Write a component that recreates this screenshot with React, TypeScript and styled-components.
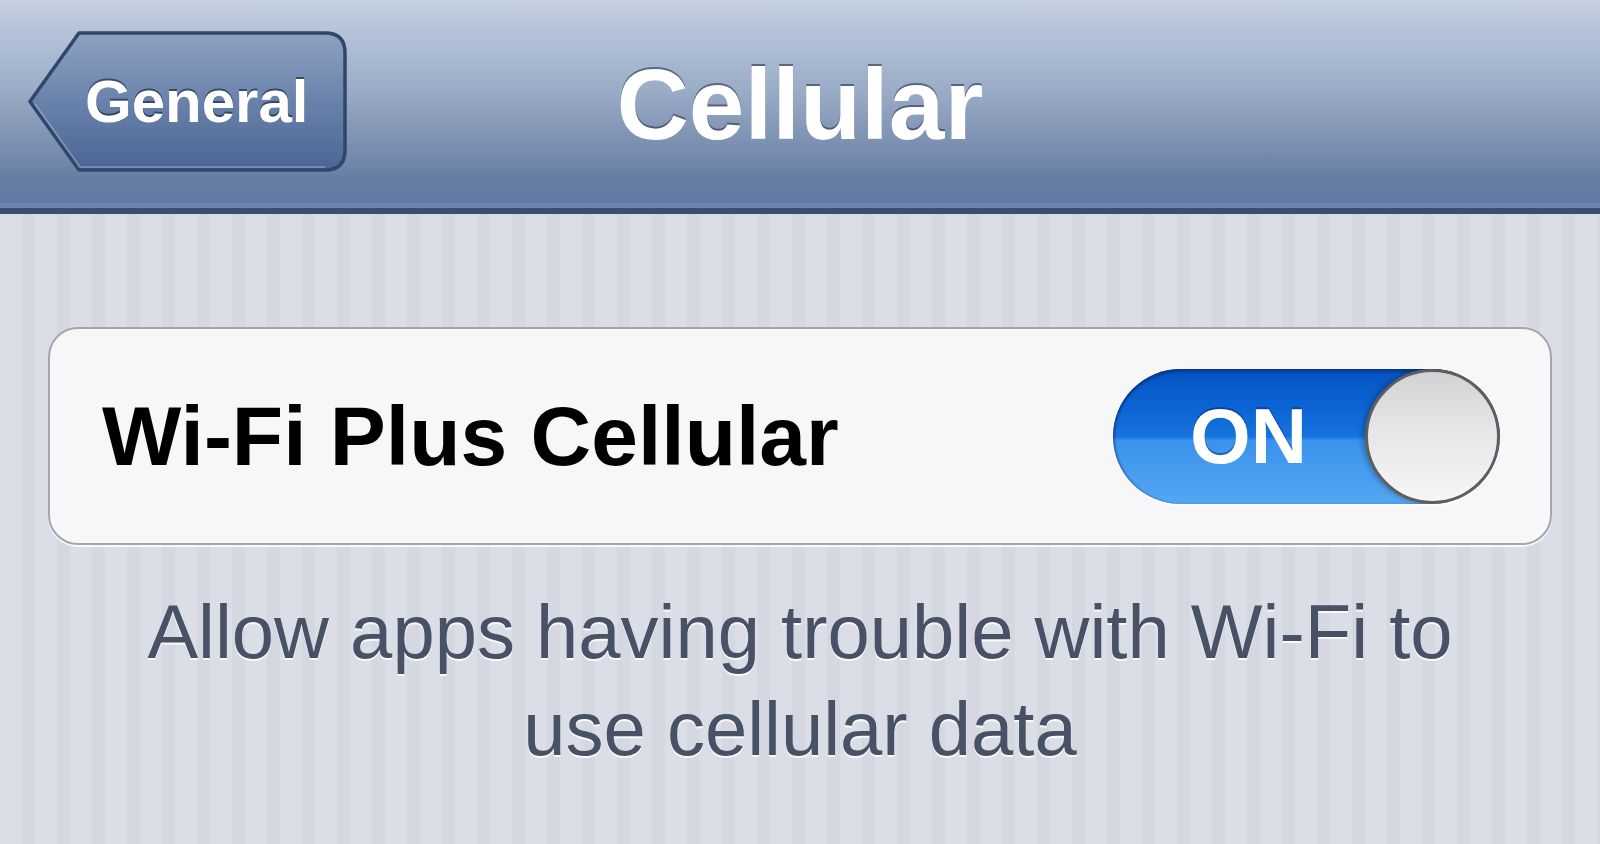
import React from "react";
import styled, { createGlobalStyle } from "styled-components";

const GlobalStyle = createGlobalStyle`
  html, body {
    margin: 0;
    padding: 0;
    height: 100%;
  }
  body {
    font-family: "Liberation Sans", Arial, Helvetica, sans-serif;
    background-color: #d9dce4;
    background-image: repeating-linear-gradient(
      90deg,
      #dbdee6 0px,
      #dbdee6 22px,
      #d5d8e1 22px,
      #d5d8e1 35px
    );
    overflow: hidden;
  }
  #root {
    min-height: 100%;
  }
`;

const Screen = styled.div`
  width: 1600px;
  height: 844px;
  display: flex;
  flex-direction: column;
`;

const NavBar = styled.header`
  height: 208px;
  display: grid;
  grid-template-columns: 1fr auto 1fr;
  align-items: start;
  background: linear-gradient(
    180deg,
    #c6d2e2 0%,
    #b6c4d9 14%,
    #9cadc7 42%,
    #7f93b3 66%,
    #677ea4 86%,
    #5e779f 100%
  );
  border-bottom: 6px solid #3a4f6e;
  box-shadow: inset 0 -5px 0 #6b83ad;
`;

const BackButton = styled.button`
  position: relative;
  justify-self: start;
  margin: 30px 0 0 27px;
  width: 321px;
  height: 143px;
  box-sizing: border-box;
  padding: 0 40px 0 58px;
  border: 0;
  background: transparent;
  display: flex;
  align-items: center;
  font-family: inherit;
  font-weight: 700;
  font-size: 60px;
  color: #ffffff;
  cursor: pointer;
`;

const ButtonShape = styled.svg`
  position: absolute;
  inset: 0;
  width: 100%;
  height: 100%;
  z-index: 0;
`;

const ButtonLabel = styled.span`
  position: relative;
  z-index: 1;
  line-height: 60px;
  text-shadow: 0 -2px 0 rgba(20, 32, 58, 0.6);
`;

const Title = styled.h1`
  margin: 54px 0 0;
  font-size: 100px;
  line-height: 100px;
  font-weight: 700;
  color: #ffffff;
  text-shadow: 0 -2px 0 rgba(40, 54, 80, 0.6);
`;

const Content = styled.main`
  padding: 113px 48px 0;
  display: flex;
  flex-direction: column;
`;

const Card = styled.section`
  height: 218px;
  box-sizing: border-box;
  border: 2px solid #a3a6ad;
  border-radius: 30px;
  background: #f7f7f7;
  box-shadow: 0 2px 0 rgba(255, 255, 255, 0.8);
  display: flex;
  align-items: center;
  justify-content: space-between;
  padding: 0 50px 0 52px;
`;

const RowLabel = styled.span`
  font-size: 84px;
  line-height: 1;
  font-weight: 700;
  color: #000000;
`;

const Switch = styled.div`
  position: relative;
  width: 387px;
  height: 135px;
  border-radius: 68px;
  overflow: hidden;
  display: flex;
  align-items: center;
  background: linear-gradient(
    180deg,
    #0552c2 0%,
    #0c64d4 28%,
    #1673dc 50%,
    #3a92ec 53%,
    #55a7f3 100%
  );
  box-shadow: inset 0 3px 3px rgba(0, 30, 90, 0.45),
    inset 2px 0 2px rgba(0, 30, 90, 0.3), 0 2px 0 rgba(255, 255, 255, 0.9);
`;

const SwitchText = styled.span`
  flex: 1;
  text-align: center;
  padding-left: 19px;
  font-size: 78px;
  line-height: 1;
  font-weight: 700;
  color: #ffffff;
  text-shadow: 0 -2px 0 rgba(0, 40, 110, 0.5);
`;

const Knob = styled.span`
  flex-shrink: 0;
  width: 135px;
  height: 135px;
  box-sizing: border-box;
  border-radius: 50%;
  border: 3px solid #5e5e5e;
  background: linear-gradient(180deg, #d2d2d2 0%, #e6e6e6 45%, #f6f6f6 100%);
  box-shadow: -3px 0 5px rgba(0, 0, 0, 0.25);
`;

const Footnote = styled.p`
  margin: 38px auto 0;
  width: 1380px;
  text-align: center;
  font-size: 76px;
  line-height: 97px;
  font-weight: 400;
  color: #485166;
  text-shadow: 0 2px 0 rgba(255, 255, 255, 0.85);
`;

export default function App() {
  return (
    <>
      <GlobalStyle />
      <Screen>
        <NavBar>
          <BackButton type="button">
            <ButtonShape viewBox="0 0 321 143" aria-hidden="true">
              <defs>
                <linearGradient id="backFill" x1="0" y1="0" x2="0" y2="1">
                  <stop offset="0" stopColor="#8ea2c2" />
                  <stop offset="0.5" stopColor="#6a82aa" />
                  <stop offset="1" stopColor="#4a6595" />
                </linearGradient>
              </defs>
              <path
                d="M3 71.5 L52 3 H298 Q318 3 318 23 V120 Q318 140 298 140 H52 Z"
                fill="url(#backFill)"
                stroke="#30466a"
                strokeWidth="3.5"
                strokeLinejoin="round"
              />
              <path
                d="M8 74 L53 137 H298"
                fill="none"
                stroke="rgba(255,255,255,0.25)"
                strokeWidth="2"
              />
            </ButtonShape>
            <ButtonLabel>General</ButtonLabel>
          </BackButton>
          <Title>Cellular</Title>
          <span />
        </NavBar>
        <Content>
          <Card>
            <RowLabel>Wi-Fi Plus Cellular</RowLabel>
            <Switch role="switch" aria-checked="true">
              <SwitchText>ON</SwitchText>
              <Knob />
            </Switch>
          </Card>
          <Footnote>
            Allow apps having trouble with Wi-Fi to use cellular data
          </Footnote>
        </Content>
      </Screen>
    </>
  );
}
